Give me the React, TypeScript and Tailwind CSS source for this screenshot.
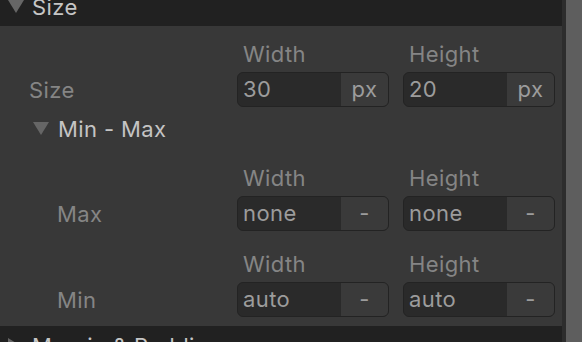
import React from 'react';

function Field({ value, unit }: { value: string; unit: string }) {
  return (
    <div className="flex h-[35px] w-[152px] overflow-hidden rounded-[6px] border border-[#232323] bg-[#2a2a2a]">
      <span className="flex-1 pl-[5px] leading-[33px] text-[#9c9c9c]">{value}</span>
      <span className="w-[47px] bg-[#3a3a3a] text-center leading-[33px] text-[#9c9c9c]">{unit}</span>
    </div>
  );
}

function Labels() {
  return (
    <div className="flex h-[28px] items-center leading-[28px] text-[#858585]">
      <div className="w-[237px]" />
      <div className="w-[152px] pl-[6px]">Width</div>
      <div className="ml-[14px] w-[152px] pl-[6px]">Height</div>
    </div>
  );
}

function FieldRow({ label, indent, unit, w, h }: { label: string; indent: boolean; unit: string; w: string; h: string }) {
  return (
    <div className="mt-[4px] flex h-[35px] items-center">
      <div className={`w-[237px] leading-[28px] text-[#858585] ${indent ? 'pl-[57px]' : 'pl-[29px]'}`}>{label}</div>
      <Field value={w} unit={unit} />
      <div className="ml-[14px]">
        <Field value={h} unit={unit} />
      </div>
    </div>
  );
}

export default function App() {
  return (
    <div
      className="flex h-[342px] w-[582px] overflow-hidden bg-[#383838] text-[22px] tracking-[0.4px]"
      style={{ fontFamily: 'Inter, "Noto Sans", sans-serif' }}
    >
      <div className="flex w-[562px] flex-col">
        {/* section header, scrolled partly out of view */}
        <div className="flex h-[26px] shrink-0 overflow-hidden bg-[#212121]">
          <div className="-mt-[7px] flex h-[28px] items-center">
            <svg width="16" height="14" viewBox="0 0 16 14" className="ml-[8px]">
              <path d="M0 0 L16 0 L8 13 Z" fill="#666666" />
            </svg>
            <span className="ml-[8px] leading-[28px] text-[#c6c6c6]">Size</span>
          </div>
        </div>

        <div className="flex-1 pt-[14px]">
          <Labels />
          <FieldRow label="Size" indent={false} unit="px" w="30" h="20" />

          <div className="mt-[8px] flex h-[28px] items-center">
            <svg width="16" height="14" viewBox="0 0 16 14" className="ml-[33px]">
              <path d="M0 0 L16 0 L8 13 Z" fill="#666666" />
            </svg>
            <span className="ml-[9px] leading-[28px] text-[#c4c4c4]">Min - Max</span>
          </div>

          <div className="mt-[21px]">
            <Labels />
          </div>
          <FieldRow label="Max" indent unit="-" w="none" h="none" />

          <div className="mt-[19px]">
            <Labels />
          </div>
          <FieldRow label="Min" indent unit="-" w="auto" h="auto" />
        </div>

        {/* next section header, only its top shows */}
        <div className="flex h-[16px] shrink-0 bg-[#212121] pt-[6px]">
          <div className="flex h-[28px] items-center">
            <svg width="13" height="16" viewBox="0 0 13 16" className="ml-[8px]">
              <path d="M0 0 L13 8 L0 16 Z" fill="#666666" />
            </svg>
            <span className="ml-[11px] leading-[28px] text-[#c6c6c6]">Margin &amp; Padding</span>
          </div>
        </div>
      </div>
      <div className="w-[4px] bg-[#2d2d2d]" />
      <div className="flex-1 bg-[#5e5e5e]" />
    </div>
  );
}
